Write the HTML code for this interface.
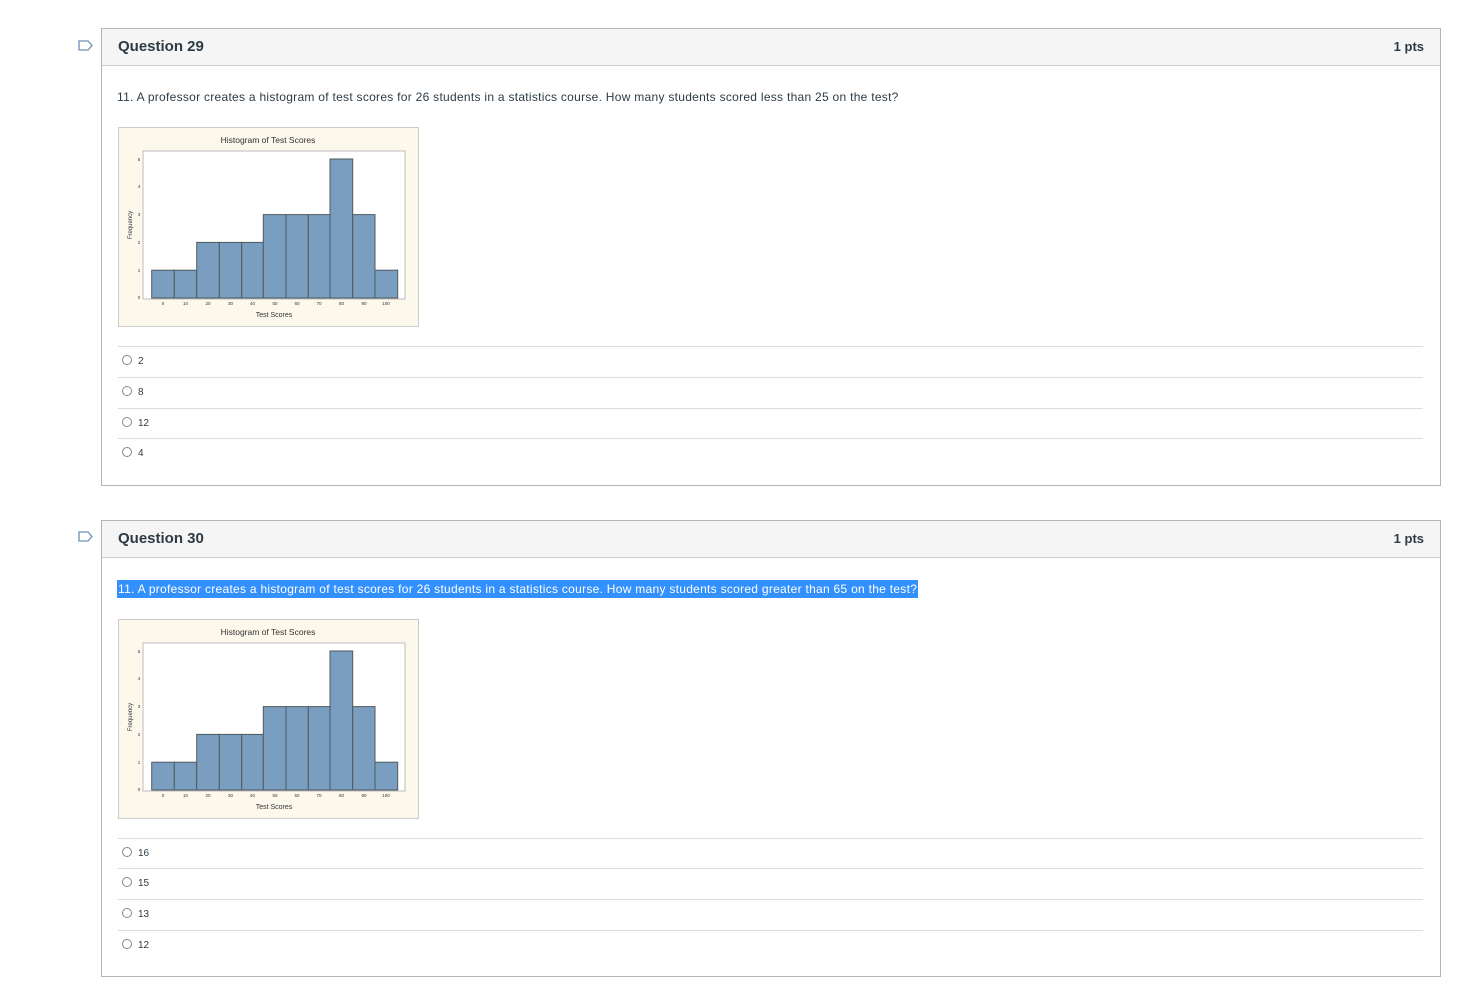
<!DOCTYPE html>
<html><head><meta charset="utf-8"><style>
body{margin:0;width:1477px;height:990px;background:#fff;position:relative;font-family:"Liberation Sans",sans-serif;color:#2d3b45;overflow:hidden}
.q{position:absolute;left:101px;width:1338px;border:1px solid #b5b5b5;background:#fff}
.hd{height:36px;background:#f5f5f5;border-bottom:1px solid #c7cdd1;position:relative}
.hd .t{position:absolute;left:16px;top:9px;font-size:15px;font-weight:bold;color:#2d3b45}
.hd .p{position:absolute;right:16px;top:10px;font-size:13px;font-weight:bold;color:#2d3b45}
.flag{position:absolute;left:78px;width:15px;height:11px}
.txt{position:absolute;left:117px;font-size:12px;color:#2d3b45;white-space:nowrap;letter-spacing:0.28px}
.hl{background:#3390ff;color:#fff;padding:2px 1px}
.opt{position:absolute;left:118px;width:1305px;height:30px;border-top:1px solid #dcdcdc;font-size:10px}
.opt i{position:absolute;left:4px;top:8px;width:8px;height:8px;border:1px solid #888;border-radius:50%}
.opt span{position:absolute;left:20px;top:10px;line-height:10px}
svg{position:absolute;left:118px}
</style></head><body>

<svg class="flag" style="top:40px" viewBox="0 0 15 11"><path d="M1 1H10L14 5.5L10 10H1Z" fill="none" stroke="#6b8fb5" stroke-width="1.3"/></svg>
<div class="q" style="top:28px;height:456px">
 <div class="hd"><div class="t">Question 29</div><div class="p">1 pts</div></div>
</div>
<div class="txt" style="top:90px">11. A professor creates a histogram of test scores for 26 students in a statistics course. How many students scored less than 25 on the test?</div>

<svg style="top:127px" width="301" height="200" viewBox="0 0 301 200">
<rect x="0.5" y="0.5" width="300" height="199" fill="#fdf8ec" stroke="#ccc"/>
<rect x="25" y="24" width="262" height="148" fill="#fff" stroke="#bbb"/>
<text x="150" y="16" font-size="8.5" text-anchor="middle" fill="#333">Histogram of Test Scores</text>
<g fill="#7a9ebf" stroke="#4f5a5f" stroke-width="1">
<rect x="33.7" y="143.2" width="22.6" height="27.8"/><rect x="56.3" y="143.2" width="22.4" height="27.8"/>
<rect x="78.7" y="115.4" width="22.6" height="55.6"/><rect x="101.3" y="115.4" width="22.4" height="55.6"/><rect x="123.7" y="115.4" width="21.6" height="55.6"/>
<rect x="145.3" y="87.6" width="22.7" height="83.4"/><rect x="168" y="87.6" width="22.3" height="83.4"/><rect x="190.3" y="87.6" width="21.7" height="83.4"/>
<rect x="212" y="32" width="22.7" height="139"/><rect x="234.7" y="87.6" width="22.3" height="83.4"/><rect x="257" y="143.2" width="22.7" height="27.8"/>
</g>
<g font-size="4.5" fill="#333" text-anchor="middle"><text x="45" y="178">0</text><text x="67.5" y="178">10</text><text x="90" y="178">20</text><text x="112.5" y="178">30</text><text x="134.5" y="178">40</text><text x="157" y="178">50</text><text x="179" y="178">60</text><text x="201" y="178">70</text><text x="223.5" y="178">80</text><text x="246" y="178">90</text><text x="268" y="178">100</text>
<text x="21" y="172">0</text><text x="21" y="145">1</text><text x="21" y="117">2</text><text x="21" y="89">3</text><text x="21" y="61">4</text><text x="21" y="34">5</text></g>
<text x="156" y="190" font-size="7" text-anchor="middle" fill="#333">Test Scores</text>
<text transform="translate(14 98) rotate(-90)" font-size="6" text-anchor="middle" fill="#333">Frequency</text>
</svg>

<div class="opt" style="top:346px"><i></i><span>2</span></div>
<div class="opt" style="top:377px"><i></i><span>8</span></div>
<div class="opt" style="top:408px"><i></i><span>12</span></div>
<div class="opt" style="top:438px"><i></i><span>4</span></div>

<svg class="flag" style="top:531px" viewBox="0 0 15 11"><path d="M1 1H10L14 5.5L10 10H1Z" fill="none" stroke="#6b8fb5" stroke-width="1.3"/></svg>
<div class="q" style="top:520px;height:455px">
 <div class="hd"><div class="t">Question 30</div><div class="p">1 pts</div></div>
</div>
<div class="txt" style="top:582px"><span class="hl">11. A professor creates a histogram of test scores for 26 students in a statistics course. How many students scored greater than 65 on the test?</span></div>

<svg style="top:619px" width="301" height="200" viewBox="0 0 301 200">
<rect x="0.5" y="0.5" width="300" height="199" fill="#fdf8ec" stroke="#ccc"/>
<rect x="25" y="24" width="262" height="148" fill="#fff" stroke="#bbb"/>
<text x="150" y="16" font-size="8.5" text-anchor="middle" fill="#333">Histogram of Test Scores</text>
<g fill="#7a9ebf" stroke="#4f5a5f" stroke-width="1">
<rect x="33.7" y="143.2" width="22.6" height="27.8"/><rect x="56.3" y="143.2" width="22.4" height="27.8"/>
<rect x="78.7" y="115.4" width="22.6" height="55.6"/><rect x="101.3" y="115.4" width="22.4" height="55.6"/><rect x="123.7" y="115.4" width="21.6" height="55.6"/>
<rect x="145.3" y="87.6" width="22.7" height="83.4"/><rect x="168" y="87.6" width="22.3" height="83.4"/><rect x="190.3" y="87.6" width="21.7" height="83.4"/>
<rect x="212" y="32" width="22.7" height="139"/><rect x="234.7" y="87.6" width="22.3" height="83.4"/><rect x="257" y="143.2" width="22.7" height="27.8"/>
</g>
<g font-size="4.5" fill="#333" text-anchor="middle"><text x="45" y="178">0</text><text x="67.5" y="178">10</text><text x="90" y="178">20</text><text x="112.5" y="178">30</text><text x="134.5" y="178">40</text><text x="157" y="178">50</text><text x="179" y="178">60</text><text x="201" y="178">70</text><text x="223.5" y="178">80</text><text x="246" y="178">90</text><text x="268" y="178">100</text>
<text x="21" y="172">0</text><text x="21" y="145">1</text><text x="21" y="117">2</text><text x="21" y="89">3</text><text x="21" y="61">4</text><text x="21" y="34">5</text></g>
<text x="156" y="190" font-size="7" text-anchor="middle" fill="#333">Test Scores</text>
<text transform="translate(14 98) rotate(-90)" font-size="6" text-anchor="middle" fill="#333">Frequency</text>
</svg>

<div class="opt" style="top:838px"><i></i><span>16</span></div>
<div class="opt" style="top:868px"><i></i><span>15</span></div>
<div class="opt" style="top:899px"><i></i><span>13</span></div>
<div class="opt" style="top:930px"><i></i><span>12</span></div>
</body></html>
